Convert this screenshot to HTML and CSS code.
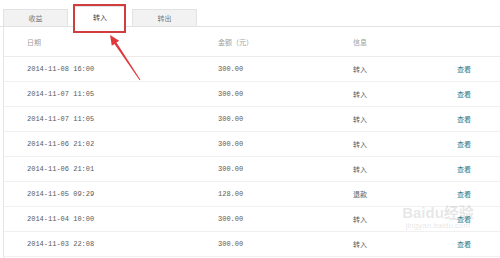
FILE: index.html
```html
<!DOCTYPE html>
<html lang="zh-CN">
<head>
    <meta charset="UTF-8">
    <title>转入记录</title>
    <link rel="stylesheet" href="styles.css">
</head>
<body>
    <div class="page">
        <div class="tabs">
            <div class="tab">收益</div>
            <div class="tab active">转入</div>
            <div class="tab">转出</div>
        </div>

        <div class="panel">
            <table class="records">
                <tr class="head">
                    <th class="c-date">日期</th>
                    <th class="c-amount">金额（元）</th>
                    <th class="c-info">信息</th>
                    <th class="c-op"></th>
                </tr>
                <tr><td class="c-date">2014-11-08 16:00</td><td class="c-amount">300.00</td><td class="c-info">转入</td><td class="c-op"><a href="#">查看</a></td></tr>
                <tr><td class="c-date">2014-11-07 11:05</td><td class="c-amount">300.00</td><td class="c-info">转入</td><td class="c-op"><a href="#">查看</a></td></tr>
                <tr><td class="c-date">2014-11-07 11:05</td><td class="c-amount">300.00</td><td class="c-info">转入</td><td class="c-op"><a href="#">查看</a></td></tr>
                <tr><td class="c-date">2014-11-06 21:02</td><td class="c-amount">300.00</td><td class="c-info">转入</td><td class="c-op"><a href="#">查看</a></td></tr>
                <tr><td class="c-date">2014-11-06 21:01</td><td class="c-amount">300.00</td><td class="c-info">转入</td><td class="c-op"><a href="#">查看</a></td></tr>
                <tr><td class="c-date">2014-11-05 09:29</td><td class="c-amount">128.00</td><td class="c-info">退款</td><td class="c-op"><a href="#">查看</a></td></tr>
                <tr><td class="c-date">2014-11-04 10:00</td><td class="c-amount">300.00</td><td class="c-info">转入</td><td class="c-op"><a href="#">查看</a></td></tr>
                <tr><td class="c-date">2014-11-03 22:08</td><td class="c-amount">300.00</td><td class="c-info">转入</td><td class="c-op"><a href="#">查看</a></td></tr>
            </table>
        </div>

        <!-- annotation drawn over the screenshot -->
        <div class="mark"></div>
        <svg class="arrow" width="50" height="50" viewBox="0 0 50 50">
            <path d="M2 2 L11.2 7.8 L8.5 9.6 L32.4 46.7 L31.6 47.3 L6.5 11 L3.8 12.8 Z" fill="#e0393b"/>
        </svg>

        <div class="watermark">
            <span class="wm-logo">Bai<b>du</b>经验</span>
            <span class="wm-url">jingyan.baidu.com</span>
        </div>
    </div>
</body>
</html>
```

FILE: styles.css
```css
body {
    margin: 0;
    background-color: #fff;
    font-family: "Liberation Mono", "Noto Sans CJK SC", monospace;
    font-size: 7px;
    color: #5a5a5a;
}

.page {
    position: relative;
    width: 500px;
    height: 258px;
    overflow: hidden;
}

.tabs {
    display: flex;
    gap: 6px;
    height: 26px;
    padding: 0 0 0 3px;
    align-items: flex-end;
    border-bottom: 1px solid #e2e2e2;
}

.tab {
    width: 63px;
    height: 16px;
    line-height: 16px;
    text-align: center;
    background-color: #f2f2f2;
    border: 1px solid #e2e2e2;
    border-bottom: none;
    color: #777;
    font-family: "Noto Sans CJK SC", sans-serif;
}

.tab.active {
    width: 50px;
    height: 20px;
    line-height: 20px;
    background-color: #fff;
    color: #444;
    margin-bottom: -1px;
}

.panel {
    margin-left: 3px;
    border-left: 1px solid #e6e6e6;
    height: 240px;
}

.records {
    border-collapse: collapse;
    width: 100%;
}

.records th,
.records td {
    padding: 0;
    text-align: left;
    border-bottom: 1px solid #f0f0f0;
    height: 24px;
    font-weight: normal;
    white-space: nowrap;
}

.records .head th {
    height: 29px;
    color: #a0a0a0;
    font-family: "Noto Sans CJK SC", sans-serif;
    border-bottom: 1px solid #ebebeb;
}

.c-date {
    padding-left: 23px !important;
    width: 191px;
}

.c-amount {
    width: 135px;
}

.c-info {
    width: 104px;
    font-family: "Noto Sans CJK SC", sans-serif;
}

.c-op a {
    color: #2a7b8c;
    text-decoration: none;
    font-family: "Noto Sans CJK SC", sans-serif;
}

.mark {
    position: absolute;
    left: 73px;
    top: 4px;
    width: 49px;
    height: 25px;
    border: 2px solid #cf3d3f;
}

.arrow {
    position: absolute;
    left: 108px;
    top: 33px;
}

.watermark {
    position: absolute;
    left: 398px;
    top: 205px;
    width: 80px;
    color: rgba(170, 170, 170, 0.3);
    font-family: "Liberation Sans", "Noto Sans CJK SC", sans-serif;
    text-align: center;
}

.wm-logo {
    display: block;
    font-size: 15px;
    font-weight: bold;
    line-height: 16px;
}

.wm-url {
    display: block;
    font-size: 8px;
}
```
